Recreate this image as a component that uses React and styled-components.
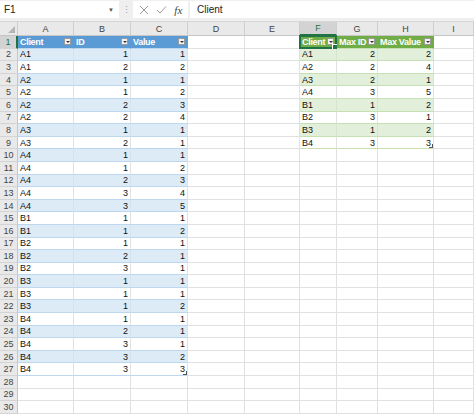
import styled, { createGlobalStyle } from "styled-components";

const GlobalStyle = createGlobalStyle`
    html, body {
        margin: 0;
        padding: 0;
        background: #ffffff;
        overflow: hidden;
    }
    body {
        font-family: "Liberation Sans", Arial, sans-serif;
    }
`;

const COLS = ["A", "B", "C", "D", "E", "F", "G", "H", "I"];
const WIDTHS = [18, 56, 57, 57, 57, 55, 37, 41, 56, 40];
const ROWS = 30;

const left = [
    ["A1", 1, 1], ["A1", 2, 2], ["A2", 1, 1], ["A2", 1, 2], ["A2", 2, 3],
    ["A2", 2, 4], ["A3", 1, 1], ["A3", 2, 1], ["A4", 1, 1], ["A4", 1, 2],
    ["A4", 2, 3], ["A4", 3, 4], ["A4", 3, 5], ["B1", 1, 1], ["B1", 1, 2],
    ["B2", 1, 1], ["B2", 2, 1], ["B2", 3, 1], ["B3", 1, 1], ["B3", 1, 1],
    ["B3", 1, 2], ["B4", 1, 1], ["B4", 2, 1], ["B4", 3, 1], ["B4", 3, 2],
    ["B4", 3, 3],
];

const right = [
    ["A1", 2, 2], ["A2", 2, 4], ["A3", 2, 1], ["A4", 3, 5],
    ["B1", 1, 2], ["B2", 3, 1], ["B3", 1, 2], ["B4", 3, 3],
];

const Wrapper = styled.div`
    width: 474px;
    height: 414px;
    overflow: hidden;
    background: #ffffff;
`;

const FormulaBar = styled.div`
    height: 22px;
    box-sizing: border-box;
    background: #efefef;
    display: flex;
    align-items: stretch;
    padding: 1px 0 3px 0;
    gap: 2px;
    border-bottom: 1px solid #d6d6d6;
`;

const NameBox = styled.div`
    width: 119px;
    background: #fff;
    display: flex;
    align-items: center;
    justify-content: space-between;
    padding: 0 5px 0 4px;
    box-sizing: border-box;
    font-size: 10px;
    color: #222;
`;

const Caret = styled.span`
    font-size: 6px;
    color: #555;
`;

const Dots = styled.div`
    width: 10px;
    display: flex;
    align-items: center;
    justify-content: center;
    color: #9a9a9a;
    font-size: 9px;
`;

const IconBox = styled.div`
    width: 55px;
    background: #fff;
    display: flex;
    align-items: center;
    justify-content: space-around;
    padding: 0 2px;
    box-sizing: border-box;
`;

const Fx = styled.span`
    font-family: "Liberation Serif", serif;
    font-style: italic;
    font-size: 11px;
    color: #444;
`;

const FormulaInput = styled.div`
    flex: 1;
    background: #fff;
    display: flex;
    align-items: center;
    padding-left: 7px;
    font-size: 10px;
    color: #222;
`;

const Sheet = styled.div`
    display: grid;
    grid-template-columns: ${WIDTHS.map((w) => w + "px").join(" ")};
    grid-template-rows: 14px repeat(${ROWS}, 12.6px);
    font-size: 9px;
`;

const ColHead = styled.div`
    background: ${(p) => (p.$active ? "#d3d3d3" : "#e9e9e9")};
    color: ${(p) => (p.$active ? "#217346" : "#444")};
    border-right: 1px solid #cfcfcf;
    border-bottom: ${(p) => (p.$active ? "2px solid #217346" : "1px solid #c6c6c6")};
    box-sizing: border-box;
    display: flex;
    align-items: center;
    justify-content: center;
    font-size: 9px;
    position: relative;
`;

const Corner = styled(ColHead)`
    &::after {
        content: "";
        position: absolute;
        right: 2px;
        bottom: 2px;
        border-style: solid;
        border-width: 0 0 7px 7px;
        border-color: transparent transparent #b5b5b5 transparent;
    }
`;

const RowHead = styled.div`
    background: ${(p) => (p.$active ? "#d3d3d3" : "#e9e9e9")};
    color: ${(p) => (p.$active ? "#217346" : "#444")};
    border-right: ${(p) => (p.$active ? "2px solid #217346" : "1px solid #c6c6c6")};
    border-bottom: 1px solid #d4d4d4;
    box-sizing: border-box;
    display: flex;
    align-items: center;
    justify-content: center;
    font-size: 9px;
`;

const Cell = styled.div`
    background: ${(p) => p.$bg || "#fff"};
    color: ${(p) => (p.$head ? "#fff" : "#111")};
    font-weight: ${(p) => (p.$head ? "bold" : "normal")};
    letter-spacing: ${(p) => (p.$head ? "-0.3px" : "0")};
    border-right: 1px solid ${(p) => p.$vline || "#e1e1e1"};
    border-bottom: 1px solid ${(p) => p.$hline || "#e1e1e1"};
    box-sizing: border-box;
    display: flex;
    align-items: center;
    justify-content: ${(p) => (p.$num ? "flex-end" : "space-between")};
    padding: 0 2px 0 2px;
    white-space: nowrap;
    overflow: visible;
    position: relative;
`;

const FilterBtn = styled.span`
    width: 7px;
    height: 7px;
    margin-left: 1px;
    background: #f4f4f4;
    border: 1px solid #9a9a9a;
    box-sizing: border-box;
    display: inline-flex;
    align-items: center;
    justify-content: center;
    flex-shrink: 0;
    &::after {
        content: "";
        border-style: solid;
        border-width: 2px 2px 0 2px;
        border-color: #333 transparent transparent transparent;
    }
`;

const Selection = styled.span`
    position: absolute;
    left: -1px;
    top: -1px;
    right: -1px;
    bottom: -1px;
    border: 2px solid #217346;
    pointer-events: none;
    &::after {
        content: "";
        position: absolute;
        right: -3px;
        bottom: -3px;
        width: 4px;
        height: 4px;
        background: #217346;
        border: 1px solid #fff;
    }
`;

const ResizeMark = styled.span`
    position: absolute;
    right: 0;
    bottom: 0;
    width: 3px;
    height: 3px;
    border-right: 1px solid #555;
    border-bottom: 1px solid #555;
`;

function tableCell(col, row) {
    // blue table A1:C27
    if (col >= 1 && col <= 3 && row <= 27) {
        const data = row === 1 ? ["Client", "ID", "Value"] : left[row - 2];
        const head = row === 1;
        const band = !head && row % 2 === 0;
        return {
            text: data[col - 1],
            head,
            num: !head && col > 1,
            bg: head ? "#5b9bd5" : band ? "#ddebf7" : "#fff",
            hline: "#bdd7ee",
            vline: head ? "#5b9bd5" : band ? "#d5e3f0" : "#e1e1e1",
            filter: head,
            mark: row === 27 && col === 3,
        };
    }
    // green table F1:H9
    if (col >= 6 && col <= 8 && row <= 9) {
        const data = row === 1 ? ["Client", "Max ID", "Max Value"] : right[row - 2];
        const head = row === 1;
        const band = !head && row % 2 === 0;
        return {
            text: data[col - 6],
            head,
            num: !head && col > 6,
            bg: head ? "#70ad47" : band ? "#e2efda" : "#fff",
            hline: "#c6e0b4",
            vline: head ? "#70ad47" : band ? "#d6e6cc" : "#e1e1e1",
            filter: head,
            mark: row === 9 && col === 8,
            selected: row === 1 && col === 6,
        };
    }
    return null;
}

export default function App() {
    const cells = [];

    cells.push(<Corner key="corner" />);
    COLS.forEach((c, i) => {
        cells.push(
            <ColHead key={"h" + c} $active={i === 5}>
                {c}
            </ColHead>
        );
    });

    for (let r = 1; r <= ROWS; r++) {
        cells.push(
            <RowHead key={"r" + r} $active={r === 1}>
                {r}
            </RowHead>
        );
        for (let c = 1; c <= COLS.length; c++) {
            const t = tableCell(c, r);
            if (!t) {
                cells.push(<Cell key={r + "-" + c} />);
                continue;
            }
            cells.push(
                <Cell
                    key={r + "-" + c}
                    $bg={t.bg}
                    $head={t.head}
                    $num={t.num}
                    $hline={t.hline}
                    $vline={t.vline}
                >
                    <span>{t.text}</span>
                    {t.filter && <FilterBtn />}
                    {t.mark && <ResizeMark />}
                    {t.selected && <Selection />}
                </Cell>
            );
        }
    }

    return (
        <Wrapper>
            <GlobalStyle />
            <FormulaBar>
                <NameBox>
                    <span>F1</span>
                    <Caret>▼</Caret>
                </NameBox>
                <Dots>⋮</Dots>
                <IconBox>
                    <svg width="10" height="10" viewBox="0 0 10 10">
                        <path d="M1 1 L9 9 M9 1 L1 9" stroke="#9a9a9a" strokeWidth="1" fill="none" />
                    </svg>
                    <svg width="11" height="10" viewBox="0 0 11 10">
                        <path d="M1 5 L4 8 L10 1.5" stroke="#9a9a9a" strokeWidth="1" fill="none" />
                    </svg>
                    <Fx>fx</Fx>
                </IconBox>
                <FormulaInput>Client</FormulaInput>
            </FormulaBar>
            <Sheet>{cells}</Sheet>
        </Wrapper>
    );
}
